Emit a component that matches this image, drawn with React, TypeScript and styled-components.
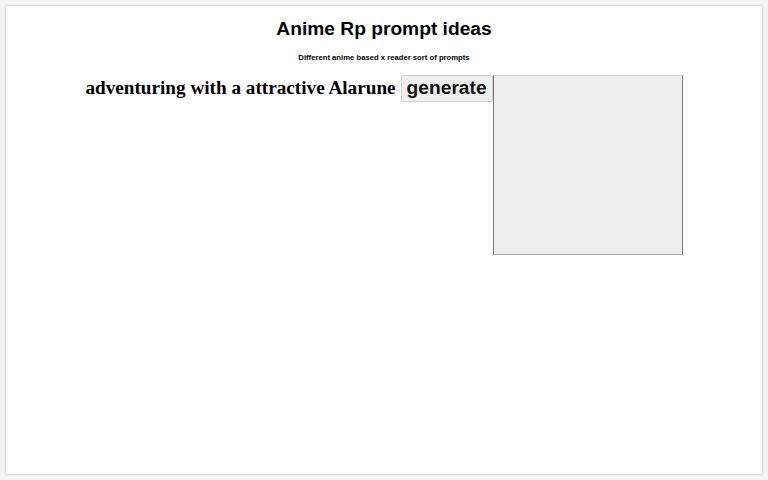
import React from "react";
import styled, { createGlobalStyle } from "styled-components";

const GlobalStyle = createGlobalStyle`
  html, body {
    margin: 0;
    padding: 0;
    background: #f3f3f3;
  }
  body {
    font-family: "Liberation Sans", Arial, sans-serif;
  }
`;

const Page = styled.div`
  padding: 5px;
  height: 480px;
  box-sizing: border-box;
`;

const Card = styled.main`
  height: 100%;
  box-sizing: border-box;
  background: #ffffff;
  border: 1px solid #dcdcdc;
  border-radius: 2px;
  padding-top: 12px;
  display: flex;
  flex-direction: column;
  align-items: center;
`;

const Title = styled.h1`
  margin: 0;
  font-size: 19.2px;
  font-weight: bold;
  line-height: normal;
  color: #000;
`;

const Subtitle = styled.p`
  margin: 13px 0 0;
  font-size: 7.7px;
  font-weight: bold;
  line-height: 9px;
  color: #000;
`;

const Row = styled.div`
  margin-top: 13px;
  display: flex;
  align-items: flex-start;
`;

const Prompt = styled.div`
  display: flex;
  align-items: baseline;
  gap: 5px;
`;

const PromptText = styled.span`
  font-family: "Liberation Serif", "Times New Roman", serif;
  font-size: 19.2px;
  font-weight: bold;
  color: #000;
`;

const GenerateButton = styled.button`
  font-family: "Liberation Sans", Arial, sans-serif;
  font-size: 19.2px;
  font-weight: bold;
  line-height: normal;
  color: #111;
  background: #efefef;
  border: 1px solid #d2d2d2;
  border-radius: 2px;
  padding: 1px 5px 2px;
  height: 27px;
`;

const Output = styled.textarea`
  width: 190px;
  height: 180px;
  box-sizing: border-box;
  margin: 0;
  background: #eeeeee;
  border-style: solid;
  border-width: 1px;
  border-color: #cfcfcf #7a7a7a #a9a9a9 #7a7a7a;
  resize: none;
  font-family: "Liberation Sans", Arial, sans-serif;
`;

export default function App() {
  return (
    <>
      <GlobalStyle />
      <Page>
        <Card>
          <Title>Anime Rp prompt ideas</Title>
          <Subtitle>Different anime based x reader sort of prompts</Subtitle>
          <Row>
            <Prompt>
              <PromptText>adventuring with a attractive Alarune</PromptText>
              <GenerateButton>generate</GenerateButton>
            </Prompt>
            <Output readOnly />
          </Row>
        </Card>
      </Page>
    </>
  );
}
